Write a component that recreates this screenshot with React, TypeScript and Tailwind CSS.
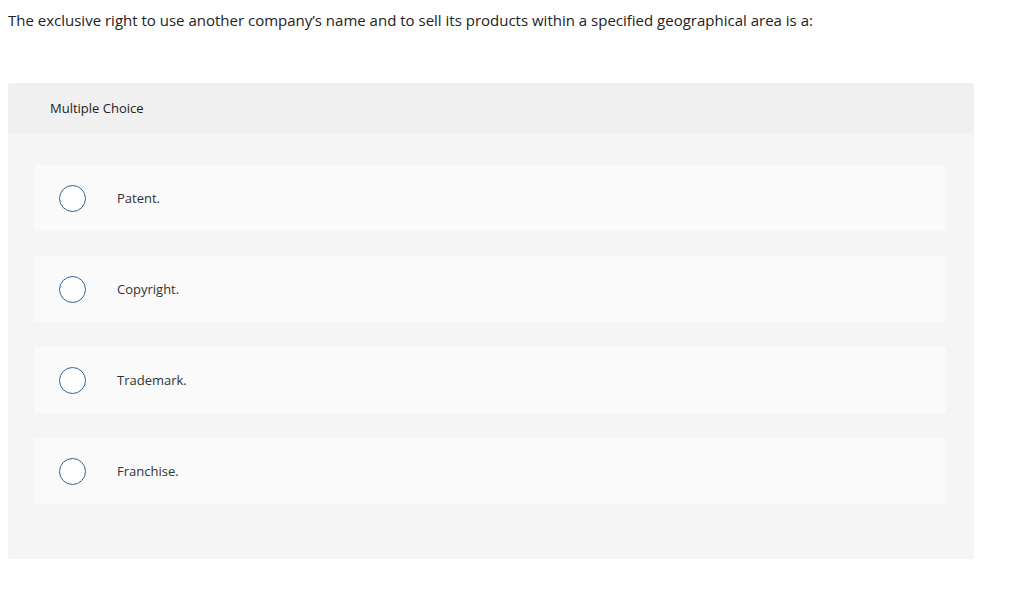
const OPTIONS = ['Patent.', 'Copyright.', 'Trademark.', 'Franchise.']

function Radio() {
  return <span className="block h-[27px] w-[27px] shrink-0 rounded-full border-[1.5px] border-[#2d6397] bg-white" />
}

export default function App() {
  return (
    <div className="min-h-screen bg-white px-2 text-[#333]" style={{ fontFamily: '"Open Sans", "Liberation Sans", sans-serif' }}>
      <p className="pt-[9px] text-[15px] leading-[22px] text-[#222]">
        The exclusive right to use another company’s name and to sell its products within a specified geographical area is a:
      </p>

      <div className="mt-[52px] w-[966px] overflow-hidden rounded-[3px] bg-[#f5f5f5]">
        <div className="flex h-[50px] items-center bg-[#f0f0f0] pt-[2px] pl-[42px] text-[13px] text-[#222]">
          Multiple Choice
        </div>
        <div className="flex flex-col gap-[25px] px-[26px] pt-[32px] pb-[55px]">
          {OPTIONS.map(o => (
            <div key={o} className="flex h-[66px] w-[912px] items-center rounded-[3px] bg-[#fafafa] pl-[25px]">
              <Radio />
              <span className="ml-[31px] pt-[2px] text-[13px] text-[#333]">{o}</span>
            </div>
          ))}
        </div>
      </div>
    </div>
  )
}
